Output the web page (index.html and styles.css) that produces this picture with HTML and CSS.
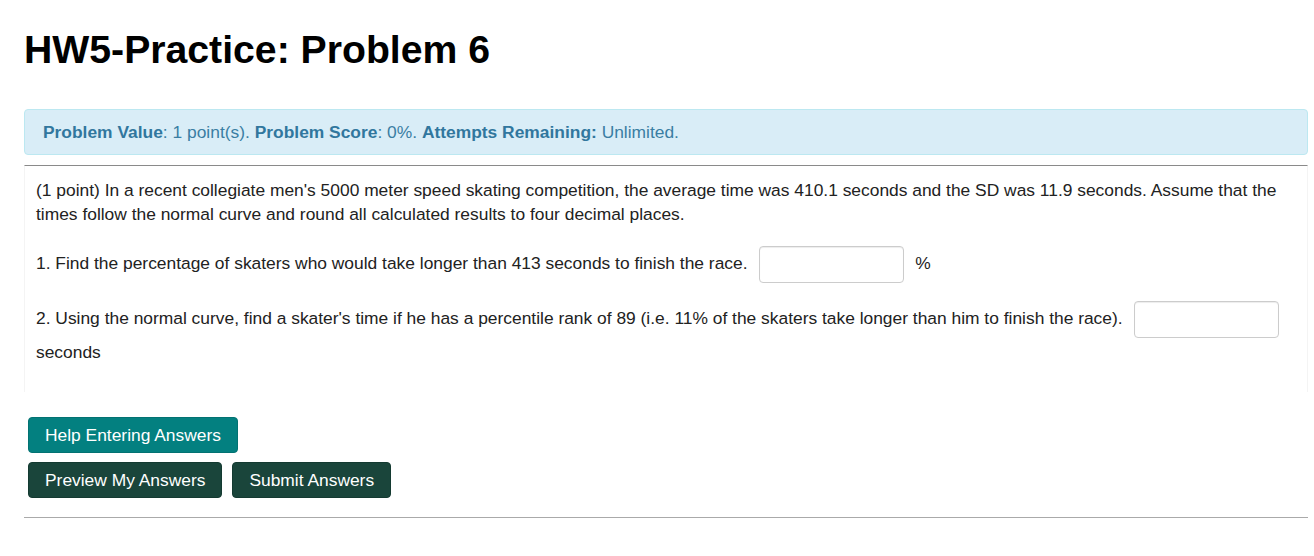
FILE: index.html
```html
<!DOCTYPE html>
<html lang="en">
<head>
  <meta charset="UTF-8" />
  <meta name="viewport" content="width=device-width, initial-scale=1.0"/>
  <title>HW5-Practice: Problem 6</title>
  <link rel="stylesheet" href="styles.css">
</head>
<body>
  <div class="page">
    <h1 class="title">HW5-Practice: Problem 6</h1>

    <div class="alert-info">
      <b>Problem Value</b>: 1 point(s). <b>Problem Score</b>: 0%. <b>Attempts Remaining:</b> Unlimited.
    </div>

    <div class="problem">
      <p class="intro">(1 point) In a recent collegiate men's 5000 meter speed skating competition, the average time was 410.1 seconds and the SD was 11.9 seconds. Assume that the times follow the normal curve and round all calculated results to four decimal places.</p>
      <p class="question">1. Find the percentage of skaters who would take longer than 413 seconds to finish the race. <input class="answer" type="text"> <span class="unit">%</span></p>
      <p class="question">2. Using the normal curve, find a skater's time if he has a percentile rank of 89 (i.e. 11% of the skaters take longer than him to finish the race). <input class="answer" type="text"> <span class="after">seconds</span></p>
    </div>

    <div class="actions">
      <div class="row">
        <button class="btn btn-help">Help Entering Answers</button>
      </div>
      <div class="row">
        <button class="btn btn-dark">Preview My Answers</button>
        <button class="btn btn-dark">Submit Answers</button>
      </div>
    </div>
  </div>
</body>
</html>
```

FILE: styles.css
```css
body {
  margin: 0;
  background: #fff;
  font-family: 'Liberation Sans', Arial, sans-serif;
  font-size: 17.4px;
  line-height: 24px;
  color: #222;
}

.page {
  margin: 0 6px 0 24px;
}

.title {
  margin: 28px 0 38px;
  font-size: 39.2px;
  line-height: 1.1;
  font-weight: bold;
  color: #000;
}

.alert-info {
  padding: 10px 18px;
  background: #d9edf7;
  border: 1px solid #bce8f1;
  border-radius: 4px;
  color: #3a7ea3;
}

.alert-info b {
  color: #31779e;
}

.problem {
  margin-top: 10px;
  padding: 12px 11px 28px;
  border-top: 1px solid #8a8a8a;
  border-left: 1px solid #f4f4f4;
  border-right: 1px solid #f4f4f4;
}

.problem p {
  margin: 0;
}

.intro {
  margin-bottom: 20px !important;
}

.question {
  margin-bottom: 18px !important;
}

.question:last-child {
  margin-bottom: 0 !important;
}

.answer {
  width: 145px;
  height: 37px;
  box-sizing: border-box;
  margin: 0 2px 0 7px;
  vertical-align: middle;
  border: 1px solid #ccc;
  border-radius: 4px;
  box-shadow: inset 0 1px 1px rgba(0, 0, 0, 0.075);
  font: inherit;
}

.unit {
  margin-left: 4px;
}

.after {
  display: inline-block;
  margin-top: 2px;
}

.actions {
  padding: 25px 0 19px 4px;
  border-bottom: 1px solid #aaa;
}

.row {
  display: flex;
  gap: 10px;
  margin-bottom: 9px;
}

.row:last-child {
  margin-bottom: 0;
}

.btn {
  height: 36px;
  padding: 0 16px;
  border: 1px solid transparent;
  border-radius: 4px;
  font-family: 'Liberation Sans', Arial, sans-serif;
  font-size: 17.4px;
  color: #fff;
}

.btn-help {
  background: #038080;
  border-color: #027272;
}

.btn-dark {
  background: #1a453b;
  border-color: #143a31;
}
```
